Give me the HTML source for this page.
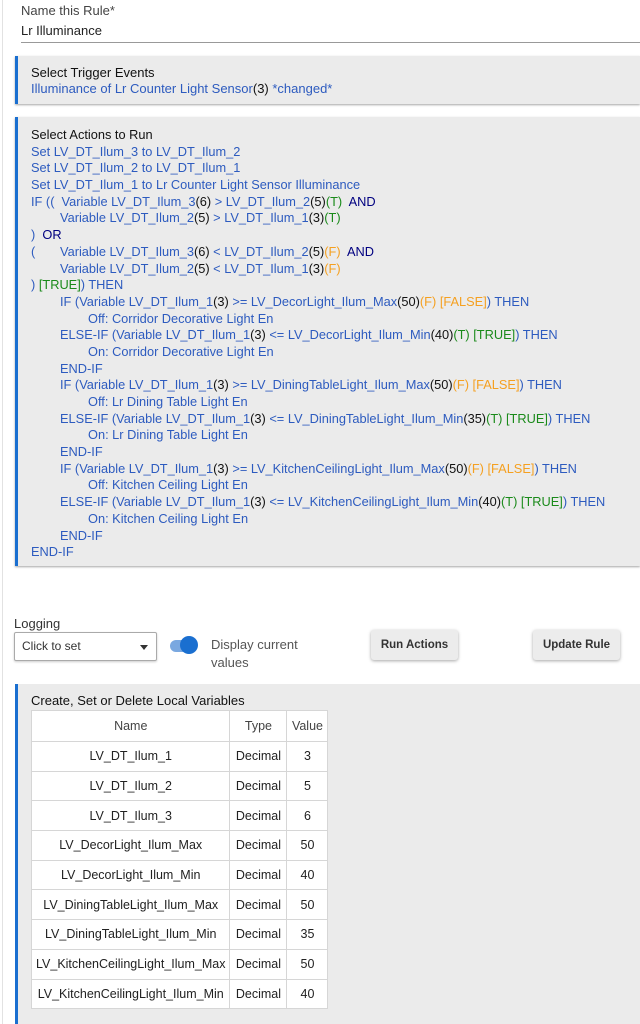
<!DOCTYPE html>
<html><head><meta charset="utf-8"><style>
*{margin:0;padding:0;box-sizing:border-box}
body{width:640px;height:1024px;background:#fff;font-family:"Liberation Sans",sans-serif;font-size:13px;color:#222;position:relative;overflow:hidden}
.leftline{position:absolute;left:2px;top:0;width:1px;height:1024px;background:#e2e2e2}
.abs{position:absolute}
.panel{position:absolute;left:15px;right:0;background:#ebebeb;border-left:3px solid #1a6fd0;box-shadow:0 1px 2px rgba(0,0,0,.35)}
.b{color:#2d5bbf}.n{color:#000080}.g{color:#1a8a1a}.o{color:#f5a020}.k{color:#111}
.code{font-size:12.8px}
.code div{height:16.7px;line-height:16.7px;white-space:nowrap}
.i1{padding-left:29px}.i2{padding-left:57px}
.btn{position:absolute;background:#ececec;border-radius:3px;box-shadow:0 1px 3px rgba(0,0,0,.35);font-size:11.5px;font-weight:bold;color:#333;text-align:center;line-height:30px;height:30px}
table{position:absolute;left:31px;top:710px;border-collapse:collapse;background:#fff;font-size:12.5px}
td,th{border:1px solid #d6d6d6;text-align:center;height:29.7px;padding:0 4px}
th{font-weight:normal;color:#444;height:31px}
</style></head><body>
<div class="leftline"></div>
<div class="abs" style="left:21px;top:3px;color:#444">Name this Rule*</div>
<div class="abs" style="left:21px;top:23px;color:#222">Lr Illuminance</div>
<div class="abs" style="left:21px;top:42px;width:619px;height:1px;background:#999"></div>

<div class="panel" style="top:56px;height:48px">
<div class="abs k" style="left:13px;top:9px">Select Trigger Events</div>
<div class="abs b" style="left:13px;top:25px">Illuminance of Lr Counter Light Sensor<span class="k">(3)</span> *changed*</div>
</div>

<div class="panel code" style="top:117px;height:449px;padding:10px 0 0 13px">
<div class="k">Select Actions to Run</div>
<div class="b">Set LV_DT_Ilum_3 to LV_DT_Ilum_2</div>
<div class="b">Set LV_DT_Ilum_2 to LV_DT_Ilum_1</div>
<div class="b">Set LV_DT_Ilum_1 to Lr Counter Light Sensor Illuminance</div>
<div class="b">IF ((&nbsp; Variable LV_DT_Ilum_3<span class="k">(6)</span> &gt; LV_DT_Ilum_2<span class="k">(5)</span><span class="g">(T)</span>&nbsp; <span class="n">AND</span></div>
<div class="b i1">Variable LV_DT_Ilum_2<span class="k">(5)</span> &gt; LV_DT_Ilum_1<span class="k">(3)</span><span class="g">(T)</span></div>
<div class="b">)&nbsp; <span class="n">OR</span></div>
<div class="b" style="position:relative">(<span style="position:absolute;left:29px">Variable LV_DT_Ilum_3<span class="k">(6)</span> &lt; LV_DT_Ilum_2<span class="k">(5)</span><span class="o">(F)</span>&nbsp; <span class="n">AND</span></span></div>
<div class="b i1">Variable LV_DT_Ilum_2<span class="k">(5)</span> &lt; LV_DT_Ilum_1<span class="k">(3)</span><span class="o">(F)</span></div>
<div class="b">) <span class="g">[TRUE]</span>) THEN</div>
<div class="b i1">IF (Variable LV_DT_Ilum_1<span class="k">(3)</span> &gt;= LV_DecorLight_Ilum_Max<span class="k">(50)</span><span class="o">(F) [FALSE]</span>) THEN</div>
<div class="b i2">Off: Corridor Decorative Light En</div>
<div class="b i1">ELSE-IF (Variable LV_DT_Ilum_1<span class="k">(3)</span> &lt;= LV_DecorLight_Ilum_Min<span class="k">(40)</span><span class="g">(T) [TRUE]</span>) THEN</div>
<div class="b i2">On: Corridor Decorative Light En</div>
<div class="b i1">END-IF</div>
<div class="b i1">IF (Variable LV_DT_Ilum_1<span class="k">(3)</span> &gt;= LV_DiningTableLight_Ilum_Max<span class="k">(50)</span><span class="o">(F) [FALSE]</span>) THEN</div>
<div class="b i2">Off: Lr Dining Table Light En</div>
<div class="b i1">ELSE-IF (Variable LV_DT_Ilum_1<span class="k">(3)</span> &lt;= LV_DiningTableLight_Ilum_Min<span class="k">(35)</span><span class="g">(T) [TRUE]</span>) THEN</div>
<div class="b i2">On: Lr Dining Table Light En</div>
<div class="b i1">END-IF</div>
<div class="b i1">IF (Variable LV_DT_Ilum_1<span class="k">(3)</span> &gt;= LV_KitchenCeilingLight_Ilum_Max<span class="k">(50)</span><span class="o">(F) [FALSE]</span>) THEN</div>
<div class="b i2">Off: Kitchen Ceiling Light En</div>
<div class="b i1">ELSE-IF (Variable LV_DT_Ilum_1<span class="k">(3)</span> &lt;= LV_KitchenCeilingLight_Ilum_Min<span class="k">(40)</span><span class="g">(T) [TRUE]</span>) THEN</div>
<div class="b i2">On: Kitchen Ceiling Light En</div>
<div class="b i1">END-IF</div>
<div class="b">END-IF</div>
</div>

<div class="abs" style="left:14px;top:616px;color:#333">Logging</div>
<div class="abs" style="left:14px;top:632px;width:143px;height:29px;border:1px solid #aaa;border-radius:2px;box-shadow:0 1px 2px rgba(0,0,0,.2);font-size:12px;color:#333;line-height:27px;padding-left:7px">Click to set
<div class="abs" style="right:8px;top:12px;width:0;height:0;border-left:4px solid transparent;border-right:4px solid transparent;border-top:5px solid #333"></div></div>
<div class="abs" style="left:170px;top:640px;width:26px;height:12px;border-radius:6px;background:#7aa8e0"></div>
<div class="abs" style="left:180px;top:636px;width:18px;height:18px;border-radius:9px;background:#1a6fd0"></div>
<div class="abs" style="left:211px;top:636px;color:#555;line-height:18px">Display current<br>values</div>
<div class="btn" style="left:371px;top:630px;width:87px">Run Actions</div>
<div class="btn" style="left:533px;top:630px;width:87px">Update Rule</div>

<div class="panel" style="top:684px;bottom:0;box-shadow:none"></div>
<div class="abs k" style="left:31px;top:693px">Create, Set or Delete Local Variables</div>
<table>
<tr><th style="width:197px">Name</th><th style="width:57px">Type</th><th style="width:41px">Value</th></tr>
<tr><td>LV_DT_Ilum_1</td><td>Decimal</td><td>3</td></tr>
<tr><td>LV_DT_Ilum_2</td><td>Decimal</td><td>5</td></tr>
<tr><td>LV_DT_Ilum_3</td><td>Decimal</td><td>6</td></tr>
<tr><td>LV_DecorLight_Ilum_Max</td><td>Decimal</td><td>50</td></tr>
<tr><td>LV_DecorLight_Ilum_Min</td><td>Decimal</td><td>40</td></tr>
<tr><td>LV_DiningTableLight_Ilum_Max</td><td>Decimal</td><td>50</td></tr>
<tr><td>LV_DiningTableLight_Ilum_Min</td><td>Decimal</td><td>35</td></tr>
<tr><td>LV_KitchenCeilingLight_Ilum_Max</td><td>Decimal</td><td>50</td></tr>
<tr><td>LV_KitchenCeilingLight_Ilum_Min</td><td>Decimal</td><td>40</td></tr>
</table>
</body></html>
